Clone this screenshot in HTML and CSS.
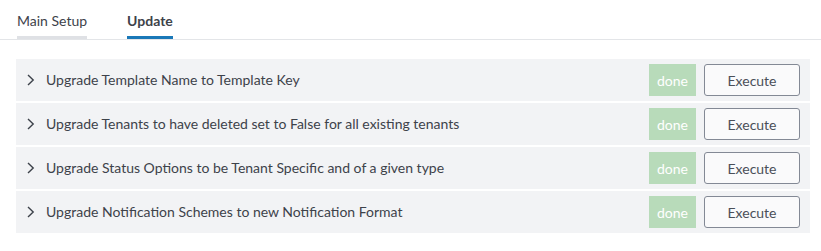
FILE: index.html
```html
<!DOCTYPE html>
<html>
<head>
<meta charset="utf-8">
<link rel="stylesheet" href="styles.css">
</head>
<body>
<div class="tabs">
  <div class="tab">Main Setup</div>
  <div class="tab active">Update</div>
</div>
<div class="list">
  <div class="row">
    <span class="chev"><svg width="8" height="12" viewBox="0 0 8 12"><path d="M1 1 L6.2 6 L1 11" fill="none" stroke="#3d424a" stroke-width="1.4"/></svg></span>
    <span class="label">Upgrade Template Name to Template Key</span>
    <span class="done">done</span>
    <button class="exec">Execute</button>
  </div>
  <div class="row">
    <span class="chev"><svg width="8" height="12" viewBox="0 0 8 12"><path d="M1 1 L6.2 6 L1 11" fill="none" stroke="#3d424a" stroke-width="1.4"/></svg></span>
    <span class="label">Upgrade Tenants to have deleted set to False for all existing tenants</span>
    <span class="done">done</span>
    <button class="exec">Execute</button>
  </div>
  <div class="row">
    <span class="chev"><svg width="8" height="12" viewBox="0 0 8 12"><path d="M1 1 L6.2 6 L1 11" fill="none" stroke="#3d424a" stroke-width="1.4"/></svg></span>
    <span class="label">Upgrade Status Options to be Tenant Specific and of a given type</span>
    <span class="done">done</span>
    <button class="exec">Execute</button>
  </div>
  <div class="row">
    <span class="chev"><svg width="8" height="12" viewBox="0 0 8 12"><path d="M1 1 L6.2 6 L1 11" fill="none" stroke="#3d424a" stroke-width="1.4"/></svg></span>
    <span class="label">Upgrade Notification Schemes to new Notification Format</span>
    <span class="done">done</span>
    <button class="exec">Execute</button>
  </div>
</div>
</body>
</html>
```
FILE: styles.css
```css
html, body {
  margin: 0;
  padding: 0;
  background: #ffffff;
  font-family: Lato, "Liberation Sans", sans-serif;
  color: #3d424a;
}
.tabs {
  display: flex;
  gap: 40px;
  padding: 0 0 0 17px;
  border-bottom: 1px solid #e3e5e8;
  height: 39px;
  box-sizing: content-box;
}
.tab {
  font-size: 14px;
  line-height: 16px;
  padding-top: 13px;
  height: 23px;
  border-bottom: 3px solid #dfe1e5;
  color: #3d424a;
}
.tab.active {
  font-weight: 700;
  border-bottom-color: #1a78b8;
}
.list {
  margin: 19px 11px 0 16px;
  display: flex;
  flex-direction: column;
  gap: 2px;
}
.row {
  display: flex;
  align-items: center;
  height: 42px;
  background: #f2f3f5;
  padding: 0 10px 0 11px;
}
.chev {
  display: flex;
  width: 19px;
  margin-top: -1px;
}
.label {
  flex: 1;
  font-size: 14px;
  margin-top: -2px;
}
.done {
  width: 47px;
  height: 32px;
  background: #b8dbba;
  color: #ffffff;
  font-size: 14px;
  display: flex;
  align-items: center;
  justify-content: center;
  margin-right: 8px;
}
.exec {
  width: 96px;
  height: 32px;
  background: #fafafb;
  border: 1px solid #838995;
  border-radius: 3px;
  color: #4a4f58;
  font-family: Lato, "Liberation Sans", sans-serif;
  font-size: 14px;
  padding: 0;
}
```
